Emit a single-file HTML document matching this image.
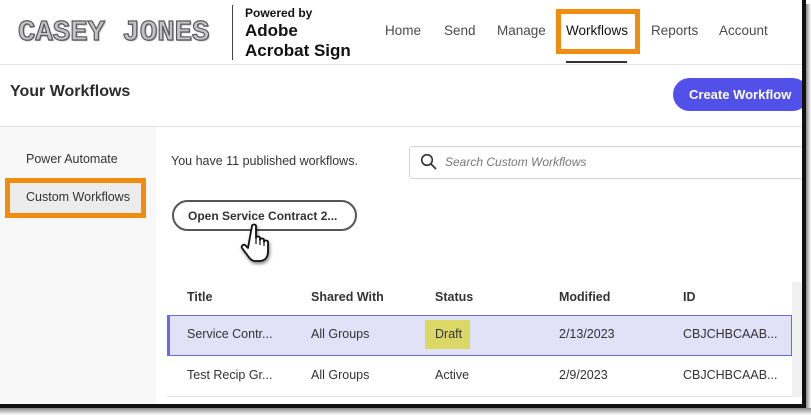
<!DOCTYPE html>
<html><head><style>
*{margin:0;padding:0;box-sizing:border-box}
body{width:811px;height:415px;overflow:hidden;background:#fff;font-family:"Liberation Sans",sans-serif;position:relative;color:#2c2c2c}
.a{position:absolute;white-space:nowrap}
.nav{top:23px;font-size:13.5px;color:#4b4b4b}
.th{top:290px;font-size:12.5px;font-weight:bold;color:#333}
.td{font-size:12.5px;color:#333}
</style></head><body>
<div class="a" style="left:0;top:0;width:802px;height:407px;background:#fff"></div>
<div class="a" style="left:18px;top:16px;font-size:29px;font-weight:bold;letter-spacing:0px;color:#c4c4c8;-webkit-text-stroke:1.2px #5a5a5a;font-family:'Liberation Mono',monospace;transform:scaleX(1.0);transform-origin:left;text-shadow:1px 1px 1px #999">CASEY&nbsp;JONES</div>
<div class="a" style="left:232px;top:5px;width:1px;height:55px;background:#444"></div>
<div class="a" style="left:245px;top:6px;font-size:12px;font-weight:bold;color:#111">Powered by</div>
<div class="a" style="left:245px;top:21px;font-size:17px;font-weight:bold;color:#111;line-height:20px">Adobe<br>Acrobat Sign</div>
<div class="a nav" style="left:385px">Home</div>
<div class="a nav" style="left:444px">Send</div>
<div class="a nav" style="left:497px">Manage</div>
<div class="a nav" style="left:566px;color:#111">Workflows</div>
<div class="a nav" style="left:651px">Reports</div>
<div class="a nav" style="left:719px">Account</div>
<div class="a" style="left:556px;top:9px;width:84px;height:45px;border:5px solid #f28c0f"></div>
<div class="a" style="left:566px;top:61px;width:61px;height:2px;background:#333"></div>
<div class="a" style="left:0;top:64px;width:802px;height:1px;background:#e3e3e3"></div>
<div class="a" style="left:10px;top:83px;font-size:16px;font-weight:bold;color:#2c2c2c">Your Workflows</div>
<div class="a" style="left:673px;top:78px;width:136px;height:33px;border-radius:17px;background:#5151ea;color:#fff;font-size:13px;font-weight:bold;padding:9px 0 0 16px">Create Workflow</div>
<div class="a" style="left:0;top:126px;width:802px;height:1px;background:#e3e3e3"></div>
<div class="a" style="left:0;top:127px;width:156px;height:280px;background:#f8f8f8"></div>
<div class="a" style="left:26px;top:152px;font-size:12.5px;color:#333">Power Automate</div>
<div class="a" style="left:5px;top:178px;width:141px;height:40px;border:5px solid #f28c0f;background:#ececec"></div>
<div class="a" style="left:26px;top:190px;font-size:12.5px;color:#333">Custom Workflows</div>
<div class="a" style="left:171px;top:154px;font-size:12.5px;color:#333">You have 11 published workflows.</div>
<div class="a" style="left:409px;top:146px;width:395px;height:33px;border:1px solid #d5d5d5;border-radius:3px"></div>
<svg class="a" style="left:420px;top:153px" width="18" height="18" viewBox="0 0 18 18"><circle cx="7" cy="7" r="5.3" fill="none" stroke="#333" stroke-width="1.6"/><path d="M11 11L16 16" stroke="#333" stroke-width="1.8"/></svg>
<div class="a" style="left:445px;top:155px;font-size:12px;font-style:italic;color:#777">Search Custom Workflows</div>
<div class="a" style="left:172px;top:200px;width:185px;height:31px;border:2px solid #555;border-radius:16px;font-size:12px;font-weight:bold;color:#333;padding:7px 0 0 14px">Open Service Contract 2...</div>
<svg class="a" style="left:238px;top:222px" width="42" height="44" viewBox="0 0 42 44"><path d="M14 4c0-2 4-2 4 0v12c0-2 4-2 4 0v2c0-2 4-2 4 0v2c0-2 4-2 4 0v9c0 6-3 10-9 10h-4c-3 0-5-2-7-5l-6-8c-1-2 1-4 3-3l3 3z" fill="#fff" stroke="#111" stroke-width="1.8" stroke-linejoin="round" style="filter:drop-shadow(1px 2px 1.5px rgba(0,0,0,.5))"/><path d="M18 16v6M22 18v5M26 20v4" stroke="#111" stroke-width="1.2"/></svg>
<div class="a" style="left:792px;top:282px;width:10px;height:115px;background:#f0f0f0"></div>
<div class="a th" style="left:187px">Title</div>
<div class="a th" style="left:311px">Shared With</div>
<div class="a th" style="left:435px">Status</div>
<div class="a th" style="left:559px">Modified</div>
<div class="a th" style="left:683px">ID</div>
<div class="a" style="left:167px;top:315px;width:625px;height:41px;background:#e1e1f8;border:1px solid #6b6be0;border-left:3px solid #6b6be0"></div>
<div class="a" style="left:425px;top:320px;width:45px;height:29px;background:#dcd868"></div>
<div class="a td" style="left:187px;top:327px">Service Contr...</div>
<div class="a td" style="left:311px;top:327px">All Groups</div>
<div class="a td" style="left:435px;top:327px">Draft</div>
<div class="a td" style="left:559px;top:327px">2/13/2023</div>
<div class="a td" style="left:683px;top:327px">CBJCHBCAAB...</div>
<div class="a td" style="left:187px;top:368px">Test Recip Gr...</div>
<div class="a td" style="left:311px;top:368px">All Groups</div>
<div class="a td" style="left:435px;top:368px">Active</div>
<div class="a td" style="left:559px;top:368px">2/9/2023</div>
<div class="a td" style="left:683px;top:368px">CBJCHBCAAB...</div>
<div class="a" style="left:167px;top:396px;width:625px;height:1px;background:#e3e3e3"></div>
<div class="a" style="left:802px;top:0;width:4px;height:410px;background:#111"></div>
<div class="a" style="left:806px;top:4px;width:5px;height:411px;background:linear-gradient(90deg,#888,#fff)"></div>
<div class="a" style="left:0;top:404px;width:806px;height:4px;background:#111"></div>
<div class="a" style="left:0;top:408px;width:811px;height:7px;background:linear-gradient(#888,#fff)"></div>
</body></html>
